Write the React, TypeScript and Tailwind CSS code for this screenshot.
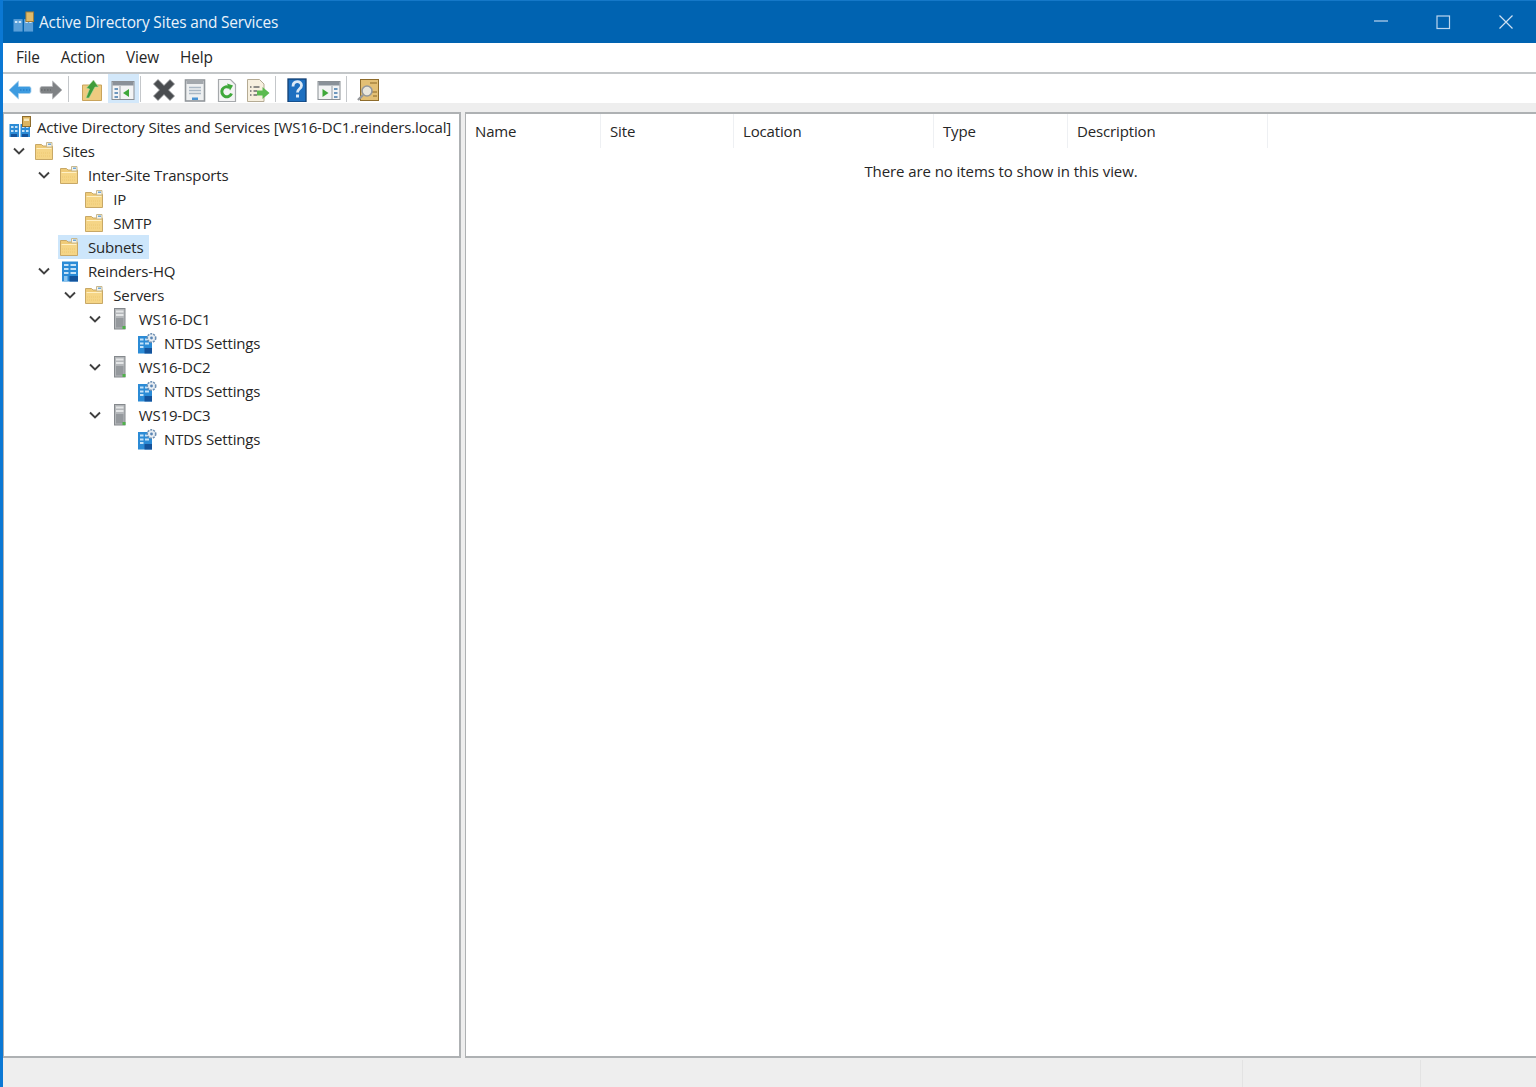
const font = "font-['Open_Sans','Noto_Sans',sans-serif]";

function Folder() {
  return (
    <svg width="20" height="20" viewBox="0 0 20 20" className="shrink-0">
      <path d="M1.500 3.500h6l1.500 1.500h9.500v13.500h-17z" fill="#efcb78" stroke="#c8a866" />
      <path d="M2 7.500h16V18H2z" fill="#f5d586" />
      <path d="M2.500 7.500h15" stroke="#fff0c4" />
      <path d="M3 12h14M3 15h14" stroke="#edc873" strokeDasharray="1 1" />
      <path d="M12.500 1.500h5.500v4.500h-5.500z" fill="#f7f3e6" stroke="#c8b98f" />
      <path d="M14 2.500h3v1.500h-3z" fill="#6fa6d8" />
    </svg>
  );
}

function SiteIcon() {
  return (
    <svg width="18" height="21" viewBox="0 0 18 21" className="shrink-0 ml-[2px]">
      <rect x="1" y="0.500" width="16" height="20" fill="#2b8bd6" />
      <path d="M3 3h4.500v2H3zM9.500 3h5.500v2H9.500zM3 7h4.500v2H3zM9.500 7h5.500v2H9.500zM3 11h4.500v2H3zM9.500 11h5.500v2H9.500z" fill="#c4e2f8" />
      <rect x="8.500" y="15" width="8.500" height="5.500" fill="#14539b" />
      <rect x="3" y="15" width="3.500" height="5.500" fill="#8cc4ee" />
    </svg>
  );
}

function NtdsIcon() {
  return (
    <svg width="20" height="21" viewBox="0 0 20 21" className="shrink-0 ml-[3px]">
      <rect x="1" y="3" width="14" height="17.500" fill="#2b8bd6" />
      <path d="M3 5.500h3.500v2H3zM8 5.500h3v2H8zM3 9.500h3.500v2H3zM8 9.500h4v2H8zM3 13h3.500v2H3z" fill="#c4e2f8" />
      <rect x="7.500" y="15" width="7.500" height="5.500" fill="#14539b" />
      <circle cx="14.500" cy="5" r="4.200" fill="#e8edf2" stroke="#6d8fb3" strokeWidth="1.600" strokeDasharray="2 1" />
      <circle cx="14.500" cy="5" r="1.400" fill="#5b86b5" />
    </svg>
  );
}

function ServerIcon() {
  return (
    <svg width="14" height="22" viewBox="0 0 14 22" className="shrink-0 ml-[1px]">
      <rect x="1.500" y="0.500" width="10.500" height="20.500" fill="#b4b7ba" stroke="#85898d" />
      <path d="M3 2.500h7.500v2H3zM3 6h7.500v2H3z" fill="#e3e5e6" />
      <rect x="3" y="10" width="7.500" height="9.500" fill="#95999d" />
      <rect x="9.500" y="18" width="3" height="3" fill="#4fb04a" />
    </svg>
  );
}

function RootIcon() {
  return (
    <svg width="23" height="22" viewBox="0 0 23 22" className="shrink-0">
      <rect x="0.500" y="8" width="9.500" height="13" fill="#2b8bd6" />
      <rect x="11.500" y="8" width="9.500" height="13" fill="#2b8bd6" />
      <path d="M2 10h2.500v2H2zM6 10h2.500v2H6zM2 14h2.500v2H2zM6 14h2.500v2H6zM13 10h2.500v2H13zM17 10h2.500v2H17zM13 14h2.500v2H13zM17 14h2.500v2H17z" fill="#c4e2f8" />
      <path d="M2 18h6v3H2zM13 18h6v3h-6z" fill="#14539b" />
      <rect x="13.500" y="0.500" width="8" height="10" fill="#dcb45f" stroke="#8e6c2c" />
      <rect x="15" y="2.500" width="5" height="2.500" fill="#f6e7bb" />
    </svg>
  );
}

function Chevron() {
  return (
    <svg width="12" height="8" viewBox="0 0 12 8" className="shrink-0">
      <path d="M1 1.500l5 5 5-5" fill="none" stroke="#404040" strokeWidth="1.900" />
    </svg>
  );
}

function ToolSvg({ children }: { children: React.ReactNode }) {
  return (
    <svg width="24" height="24" viewBox="0 0 24 24">
      {children}
    </svg>
  );
}

const toolIcons = {
  back: (
    <ToolSvg>
      <path d="M1 12l9.500-9v5.500H21q2 0 2 2v3q0 2-2 2H10.500V21z" fill="#3d9be0" stroke="#a7d0ee" strokeWidth="0.800" strokeLinejoin="round" />
      <path d="M12 12h10" stroke="#1d74c0" strokeWidth="1.200" strokeDasharray="1.500 1.500" />
    </ToolSvg>
  ),
  forward: (
    <ToolSvg>
      <path d="M23 12l-9.500-9v5.500H3q-2 0-2 2v3q0 2 2 2h10.500V21z" fill="#7f8285" stroke="#b7b9bb" strokeWidth="0.800" strokeLinejoin="round" />
      <path d="M2 12h10" stroke="#5d6063" strokeWidth="1.200" strokeDasharray="1.500 1.500" />
    </ToolSvg>
  ),
  up: (
    <ToolSvg>
      <path d="M2.500 7h19v15.500h-19z" fill="#eecb80" stroke="#c9a45c" />
      <path d="M6 20l3.500-9-3-1 7-8 5 7-3.500 0-6 11z" fill="#3f9c3a" stroke="#b6dba6" strokeWidth="0.600" />
    </ToolSvg>
  ),
  tree: (
    <ToolSvg>
      <rect x="1" y="3.500" width="22" height="18" fill="#f3f4f5" stroke="#8a8f94" />
      <rect x="1.500" y="4" width="21" height="3.500" fill="#8a9199" />
      <path d="M3.500 10h3.500v2H3.500zM3.500 14h3.500v2H3.500zM3.500 18h3.500v2H3.500z" fill="#6d97bd" />
      <path d="M9 8v13" stroke="#9aa0a6" />
      <path d="M18 11v8l-6-4z" fill="#3fa83a" />
    </ToolSvg>
  ),
  del: (
    <ToolSvg>
      <path d="M1.500 6l4.500-4.500 6 6 6-6L22.500 6l-6 6 6 6-4.500 4.500-6-6-6 6L1.500 18l6-6z" fill="#4a4d50" stroke="#909396" strokeWidth="0.800" strokeLinejoin="round" />
    </ToolSvg>
  ),
  props: (
    <ToolSvg>
      <rect x="2.500" y="2" width="19" height="21" fill="#eef0f1" stroke="#92979b" strokeWidth="1.600" />
      <rect x="3.500" y="3" width="17" height="3" fill="#a3a8ad" />
      <path d="M6 9.500h12M6 12.500h12M6 15.500h12" stroke="#aab8c5" strokeWidth="1.300" />
      <rect x="9" y="19.500" width="6" height="2.500" fill="#4a94d4" />
    </ToolSvg>
  ),
  refresh: (
    <ToolSvg>
      <path d="M3.500 1.500h12l5 5v17h-17z" fill="#f4f4f4" stroke="#a6a9ac" strokeWidth="1.200" />
      <path d="M16.500 15.500a5 5 0 1 1-2-6" fill="none" stroke="#3fa83a" strokeWidth="3" />
      <path d="M12 5.500l6 2-3 5z" fill="#3fa83a" />
    </ToolSvg>
  ),
  exportList: (
    <ToolSvg>
      <path d="M1.500 1.500h12l4.500 4.500v17.500H1.500z" fill="#f7f0df" stroke="#b5ab94" />
      <path d="M4 9h1.500M7.500 9h6M4 13h1.500M7.500 13h3.500M4 17h1.500M7.500 17h3.500" stroke="#6b6b6b" strokeWidth="1.300" />
      <path d="M11 12.500h5.500V9l7 6-7 6v-3.500H11z" fill="#5cbb50" />
    </ToolSvg>
  ),
  help: (
    <ToolSvg>
      <rect x="3" y="1" width="18" height="23" fill="#1d6fc0" stroke="#123f73" strokeWidth="1.300" />
      <path d="M8 8.500c0-6.500 8.500-6 8.500-1 0 3.500-4 3-4 7" fill="none" stroke="#dbe9f6" strokeWidth="2.800" />
      <rect x="11" y="16.500" width="3" height="3" fill="#dbe9f6" />
    </ToolSvg>
  ),
  action: (
    <ToolSvg>
      <rect x="1" y="3.500" width="22" height="18" fill="#f3f4f5" stroke="#8a8f94" />
      <rect x="1.500" y="4" width="21" height="3.500" fill="#8a9199" />
      <path d="M17 10h3.500v2H17zM17 14h3.500v2H17zM17 18h3.500v2H17z" fill="#6d97bd" />
      <path d="M15 8v13" stroke="#9aa0a6" />
      <path d="M5.500 11v8l6-4z" fill="#3fa83a" />
    </ToolSvg>
  ),
  find: (
    <ToolSvg>
      <rect x="4.500" y="1.500" width="18" height="21" fill="#e3bf74" stroke="#8e6c2c" />
      <path d="M14 5h7M16 14h5M17 18h4" stroke="#a9853f" strokeWidth="1.500" />
      <circle cx="11" cy="13" r="5" fill="#e9e6dc" stroke="#94979a" strokeWidth="1.600" />
      <path d="M7 17L2 22" stroke="#94979a" strokeWidth="2.400" />
    </ToolSvg>
  ),
};

function ToolBtn({ icon, active }: { icon: React.ReactNode; active?: boolean }) {
  return (
    <div className={`w-[31.5px] h-[29px] pt-[3px] flex items-center justify-center ${active ? "bg-[#d3e8fa]" : ""}`}>
      {icon}
    </div>
  );
}

function ToolSep({ narrow }: { narrow?: boolean }) {
  return (
    <div className={`${narrow ? "w-[7.500px]" : "w-[9px]"} h-[29px] flex items-center`}>
      <div className="ml-[1px] w-[1px] h-[26px] bg-[#c4c7ca]" />
    </div>
  );
}

type Row = {
  label: string;
  depth: number;
  icon: "folder" | "site" | "server" | "ntds";
  open?: boolean;
  selected?: boolean;
};

const ROWS: Row[] = [
  { label: "Sites", depth: 0, icon: "folder", open: true },
  { label: "Inter-Site Transports", depth: 1, icon: "folder", open: true },
  { label: "IP", depth: 2, icon: "folder" },
  { label: "SMTP", depth: 2, icon: "folder" },
  { label: "Subnets", depth: 1, icon: "folder", selected: true },
  { label: "Reinders-HQ", depth: 1, icon: "site", open: true },
  { label: "Servers", depth: 2, icon: "folder", open: true },
  { label: "WS16-DC1", depth: 3, icon: "server", open: true },
  { label: "NTDS Settings", depth: 4, icon: "ntds" },
  { label: "WS16-DC2", depth: 3, icon: "server", open: true },
  { label: "NTDS Settings", depth: 4, icon: "ntds" },
  { label: "WS19-DC3", depth: 3, icon: "server", open: true },
  { label: "NTDS Settings", depth: 4, icon: "ntds" },
];

function TreeIcon({ kind }: { kind: Row["icon"] }) {
  return (
    <div className="w-[21px] h-[24px] flex items-center justify-center shrink-0">
      {kind === "folder" && <Folder />}
      {kind === "site" && <SiteIcon />}
      {kind === "server" && <ServerIcon />}
      {kind === "ntds" && <NtdsIcon />}
    </div>
  );
}

function TreeRow({ row }: { row: Row }) {
  return (
    <div className="h-[24px] flex items-center" style={{ paddingLeft: 2 + row.depth * 25.4 }}>
      <div className="w-[27px] pr-[1px] flex items-center justify-center shrink-0">{row.open && <Chevron />}</div>
      <div className={`flex items-center h-[24px] pr-[5px] ${row.selected ? "bg-[#cde6fb]" : ""}`}>
        <TreeIcon kind={row.icon} />
        <span className="ml-[8.500px] whitespace-nowrap">{row.label}</span>
      </div>
    </div>
  );
}

const COLUMNS = [
  { name: "Name", width: "w-[135px]" },
  { name: "Site", width: "w-[133px]" },
  { name: "Location", width: "w-[200px]" },
  { name: "Type", width: "w-[134px]" },
  { name: "Description", width: "w-[200px]" },
];

export default function App() {
  return (
    <div className={`${font} w-[1536px] h-[1087px] overflow-hidden flex flex-col bg-[#eeeeee] border-l-[3px] border-[#0b78d4] text-[15px] tracking-[-0.15px] text-[#262626]`}>
      {/* Title bar */}
      <div className="h-[43px] shrink-0 bg-[#0063b1] border-t border-[#1578c8] flex items-center pl-[13px] -ml-[3px] w-[1539px] text-[#eaf2fa] text-[15.400px]">
        <svg width="22" height="22" viewBox="0 0 23 22" className="shrink-0">
          <rect x="0.500" y="8" width="9.500" height="13" fill="#5a9fd8" />
          <rect x="11.500" y="8" width="9.500" height="13" fill="#5a9fd8" />
          <path d="M2 10h2.500v2H2zM6 10h2.500v2H6zM13 10h2.500v2H13zM17 10h2.500v2H17z" fill="#cfe6f8" />
          <rect x="13.500" y="0.500" width="8" height="10" fill="#e0bb6a" stroke="#9a7a3a" />
        </svg>
        <span className="ml-[4px] pt-[1px]">Active Directory Sites and Services</span>
        <div className="ml-auto flex items-center mr-[25px]">
          <svg width="16" height="16" viewBox="0 0 16 16" className="mr-[46px]">
            <path d="M1 7h14" stroke="#bcd6ee" strokeWidth="1.200" />
          </svg>
          <svg width="16" height="16" viewBox="0 0 16 16" className="mr-[47px]">
            <rect x="2" y="2" width="12.500" height="12.500" fill="none" stroke="#bcd6ee" strokeWidth="1.200" />
          </svg>
          <svg width="16" height="16" viewBox="0 0 16 16">
            <path d="M1.500 1.500l13 13M14.500 1.500l-13 13" stroke="#cfe1f2" strokeWidth="1.200" />
          </svg>
        </div>
      </div>

      {/* Menu bar */}
      <div className="h-[31px] shrink-0 bg-white border-b-2 border-[#c3c6c8] flex items-center pl-[13px] gap-[21px] pt-[1px] text-[15.400px]">
        <span>File</span>
        <span>Action</span>
        <span>View</span>
        <span>Help</span>
      </div>

      {/* Toolbar */}
      <div className="h-[29px] shrink-0 bg-white flex items-center pl-[1px]">
        <ToolBtn icon={toolIcons.back} />
        <ToolBtn icon={toolIcons.forward} />
        <ToolSep />
        <ToolBtn icon={toolIcons.up} />
        <ToolBtn icon={toolIcons.tree} active />
        <ToolSep />
        <ToolBtn icon={toolIcons.del} />
        <ToolBtn icon={toolIcons.props} />
        <ToolBtn icon={toolIcons.refresh} />
        <ToolBtn icon={toolIcons.exportList} />
        <ToolSep narrow />
        <ToolBtn icon={toolIcons.help} />
        <ToolBtn icon={toolIcons.action} />
        <ToolSep narrow />
        <ToolBtn icon={toolIcons.find} />
      </div>

      {/* Panes */}
      <div className="flex-1 min-h-0 pt-[9px] flex gap-[4px]">
        <div className="w-[458px] shrink-0 bg-white border-t-2 border-l border-r-2 border-b-2 border-[#aeb1b3] pt-[1px] overflow-hidden">
          <div className="h-[24px] flex items-center pl-[5px]">
            <RootIcon />
            <span className="ml-[5px] whitespace-nowrap">Active Directory Sites and Services [WS16-DC1.reinders.local]</span>
          </div>
          {ROWS.map((row, i) => (
            <TreeRow key={i} row={row} />
          ))}
        </div>
        <div className="flex-1 min-w-0 bg-white border-t-2 border-l border-b-2 border-[#aeb1b3]">
          <div className="h-[34px] flex">
            {COLUMNS.map((col) => (
              <div key={col.name} className={`${col.width} h-[34px] pl-[9px] flex items-center border-r border-[#eef0f3]`}>
                {col.name}
              </div>
            ))}
          </div>
          <div className="text-center pt-[12px] tracking-[-0.08px]">There are no items to show in this view.</div>
        </div>
      </div>

      {/* Status bar */}
      <div className="h-[29px] shrink-0 flex justify-end">
        <div className="w-[178px] border-l border-[#e3e3e3] mt-[2px]" />
        <div className="w-[116px] border-l border-[#e3e3e3] mt-[2px]" />
      </div>
    </div>
  );
}
